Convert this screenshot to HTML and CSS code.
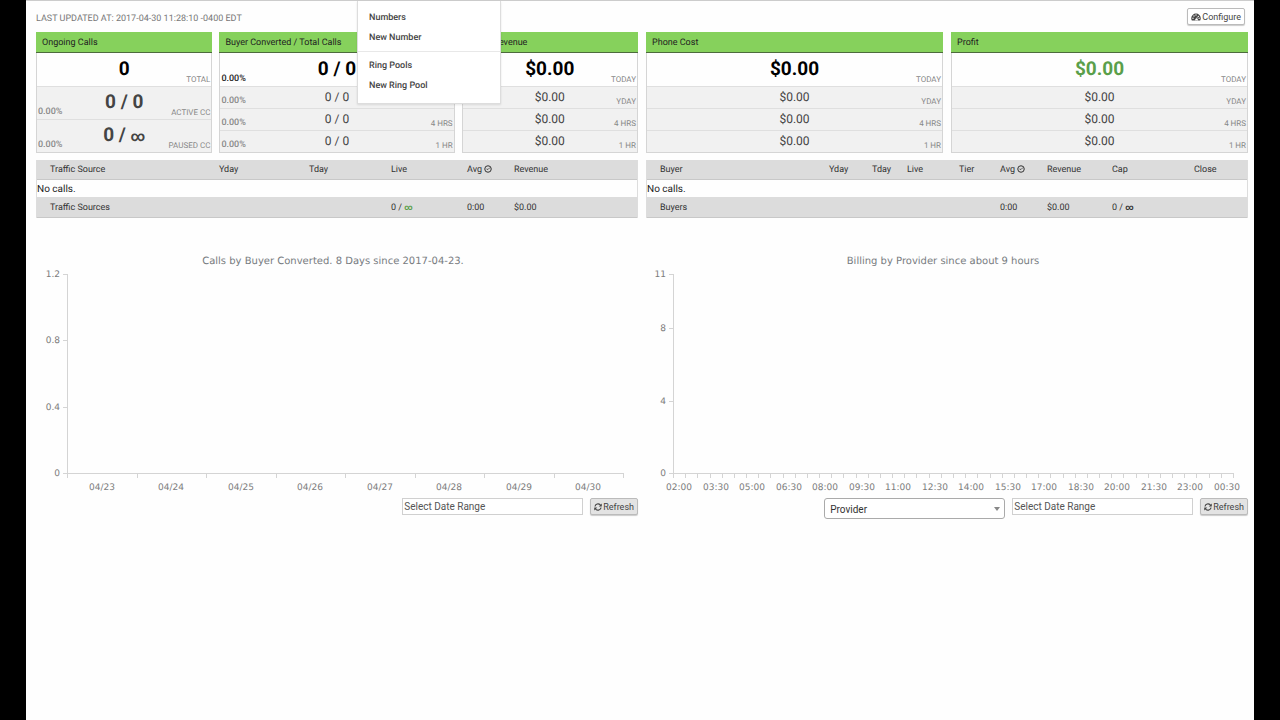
FILE: index.html
```html
<!DOCTYPE html>
<html lang="en">
  <head>
    <meta charset="UTF-8" />
    <meta name="viewport" content="width=device-width, initial-scale=1.0" />
    <title>Call Dashboard</title>
    <link rel="stylesheet" href="styles.css">
  </head>
  <body>
    <svg class="sprite" aria-hidden="true">
      <symbol id="icon-dashboard" viewBox="0 0 20 16">
        <path fill="currentColor" fill-rule="evenodd" d="M10 1a9.500 9.500 0 0 0-9.500 9.500c0 1.700.5 3.200 1.200 4.500h16.600c.7-1.300 1.200-2.800 1.200-4.500A9.500 9.500 0 0 0 10 1zM4 9a1.400 1.400 0 1 1 0 2.800A1.400 1.400 0 0 1 4 9zm2-4.300a1.400 1.400 0 1 1 0 2.800 1.400 1.400 0 0 1 0-2.800zm4-2a1.400 1.400 0 1 1 0 2.800 1.400 1.400 0 0 1 0-2.800zm2.200 4.100 1.200.4-1.100 4a2.400 2.400 0 1 1-1.300-.4zM15 5.500a1.200 1.200 0 1 1 0 2.400 1.200 1.200 0 0 1 0-2.400zM16.200 9a1.400 1.400 0 1 1 0 2.800 1.400 1.400 0 0 1 0-2.800z" />
      </symbol>
      <symbol id="icon-refresh" viewBox="0 0 16 16">
        <path fill="none" stroke="currentColor" stroke-width="2.200" d="M2 7a6 6 0 0 1 10.500-3.200L14 5.300M14 9a6 6 0 0 1-10.500 3.200L2 10.700" />
        <path fill="currentColor" d="M15.500 1v6h-6zM.5 15V9h6z" />
      </symbol>
      <symbol id="icon-clock" viewBox="0 0 16 16">
        <circle cx="8" cy="8" r="6.500" fill="none" stroke="currentColor" stroke-width="2" />
        <path fill="none" stroke="currentColor" stroke-width="1.600" d="M12 5 8 9 5 8" />
      </symbol>
    </svg>

    <main class="page">
      <nav class="menu">
        <a href="#">Numbers</a>
        <a href="#">New Number</a>
        <hr>
        <a href="#">Ring Pools</a>
        <a href="#">New Ring Pool</a>
      </nav>

      <header class="topbar">
        <span class="updated">LAST UPDATED AT: 2017-04-30 11:28:10 -0400 EDT</span>
        <button class="btn btn-white" type="button"><svg class="icon icon-wide"><use href="#icon-dashboard" /></svg>Configure</button>
      </header>

      <div class="columns">
        <section class="column">
          <div class="cards cards-three">
            <div class="card">
              <h2>Ongoing Calls</h2>
              <div class="stat big"><b>0</b><small>TOTAL</small></div>
              <div class="stat big gray"><i>0.00%</i><b>0 / 0</b><small>ACTIVE CC</small></div>
              <div class="stat big gray"><i>0.00%</i><b>0 / <span class="inf">∞</span></b><small>PAUSED CC</small></div>
            </div>
            <div class="card">
              <h2>Buyer Converted / Total Calls</h2>
              <div class="stat big"><i>0.00%</i><b>0 / 0</b><small>TODAY</small></div>
              <div class="stat gray"><i>0.00%</i><b>0 / 0</b><small>YDAY</small></div>
              <div class="stat gray"><i>0.00%</i><b>0 / 0</b><small>4 HRS</small></div>
              <div class="stat gray"><i>0.00%</i><b>0 / 0</b><small>1 HR</small></div>
            </div>
            <div class="card">
              <h2>Gross Revenue</h2>
              <div class="stat big"><b>$0.00</b><small>TODAY</small></div>
              <div class="stat gray"><b>$0.00</b><small>YDAY</small></div>
              <div class="stat gray"><b>$0.00</b><small>4 HRS</small></div>
              <div class="stat gray"><b>$0.00</b><small>1 HR</small></div>
            </div>
          </div>

          <table class="calls">
            <colgroup>
              <col><col class="w90"><col class="w82"><col class="w76"><col class="w47"><col class="w124">
            </colgroup>
            <thead>
              <tr>
                <th>Traffic Source</th>
                <th>Yday</th>
                <th>Tday</th>
                <th>Live</th>
                <th>Avg <svg class="icon"><use href="#icon-clock" /></svg></th>
                <th>Revenue</th>
              </tr>
            </thead>
            <tbody>
              <tr><td colspan="6">No calls.</td></tr>
            </tbody>
            <tfoot>
              <tr>
                <td>Traffic Sources</td>
                <td></td>
                <td></td>
                <td>0 / <span class="inf green">∞</span></td>
                <td>0:00</td>
                <td>$0.00</td>
              </tr>
            </tfoot>
          </table>

          <svg class="chart" id="callsChart" viewBox="0 0 602 256"></svg>
          <form class="filters">
            <input type="text" placeholder="Select Date Range" aria-label="Calls date range">
            <button class="btn" type="button"><svg class="icon"><use href="#icon-refresh" /></svg>Refresh</button>
          </form>
        </section>

        <section class="column">
          <div class="cards cards-two">
            <div class="card">
              <h2>Phone Cost</h2>
              <div class="stat big"><b>$0.00</b><small>TODAY</small></div>
              <div class="stat gray"><b>$0.00</b><small>YDAY</small></div>
              <div class="stat gray"><b>$0.00</b><small>4 HRS</small></div>
              <div class="stat gray"><b>$0.00</b><small>1 HR</small></div>
            </div>
            <div class="card">
              <h2>Profit</h2>
              <div class="stat big"><b class="green">$0.00</b><small>TODAY</small></div>
              <div class="stat gray"><b>$0.00</b><small>YDAY</small></div>
              <div class="stat gray"><b>$0.00</b><small>4 HRS</small></div>
              <div class="stat gray"><b>$0.00</b><small>1 HR</small></div>
            </div>
          </div>

          <table class="calls">
            <colgroup>
              <col><col class="w43"><col class="w35"><col class="w52"><col class="w41"><col class="w47"><col class="w65"><col class="w82"><col class="w54">
            </colgroup>
            <thead>
              <tr>
                <th>Buyer</th>
                <th>Yday</th>
                <th>Tday</th>
                <th>Live</th>
                <th>Tier</th>
                <th>Avg <svg class="icon"><use href="#icon-clock" /></svg></th>
                <th>Revenue</th>
                <th>Cap</th>
                <th>Close</th>
              </tr>
            </thead>
            <tbody>
              <tr><td colspan="9">No calls.</td></tr>
            </tbody>
            <tfoot>
              <tr>
                <td>Buyers</td>
                <td></td>
                <td></td>
                <td></td>
                <td></td>
                <td>0:00</td>
                <td>$0.00</td>
                <td>0 / <span class="inf">∞</span></td>
                <td></td>
              </tr>
            </tfoot>
          </table>

          <svg class="chart" id="billingChart" viewBox="0 0 602 256"></svg>
          <form class="filters">
            <span class="select">
              <select aria-label="Provider">
                <option>Provider</option>
              </select>
            </span>
            <input type="text" placeholder="Select Date Range" aria-label="Billing date range">
            <button class="btn" type="button"><svg class="icon"><use href="#icon-refresh" /></svg>Refresh</button>
          </form>
        </section>
      </div>
    </main>

    <script src="charts.js"></script>
  </body>
</html>
```
FILE: styles.css
```css
* {
  box-sizing: border-box;
}
body {
  margin: 0;
  padding: 0 26px;
  background: #000;
  color: #333;
  font-family: Roboto, "Liberation Sans", sans-serif;
  font-size: 10px;
  text-rendering: geometricPrecision;
}
.page {
  position: relative;
  min-height: 100vh;
  padding: 0 6px 0 10px;
  background: #fefefe;
  border-top: 1px solid #ccc;
}
.sprite {
  display: none;
}
.icon {
  width: 8px;
  height: 8px;
  vertical-align: -1px;
}
.icon-wide {
  width: 10px;
}
.green {
  color: #5a9f4a;
}

/* dropdown */
.menu {
  position: absolute;
  z-index: 2;
  top: 0;
  left: 331px;
  width: 144px;
  padding: 7px 0;
  background: #fff;
  border: 1px solid #ddd;
  border-top: 0;
  box-shadow: 0 1px 2px rgba(0, 0, 0, 0.1);
}
.menu a {
  display: block;
  padding: 1px 11px 0;
  line-height: 19px;
  font-size: 9px;
  font-weight: 500;
  color: #444;
  text-decoration: none;
}
.menu hr {
  margin: 3px 0 4px;
  border: 0;
  border-top: 1px solid #e8e8e8;
}

.topbar {
  display: flex;
  justify-content: space-between;
  align-items: center;
  height: 31px;
  padding-right: 3px;
}
.updated {
  padding-top: 4px;
  font-size: 9px;
  color: #777;
}
.btn {
  display: flex;
  align-items: center;
  justify-content: center;
  gap: 1px;
  height: 17px;
  padding: 0 3px;
  font: 9px Roboto, sans-serif;
  color: #444;
  background: #e3e3e3;
  border: 1px solid #bbb;
  border-radius: 2px;
  box-shadow: 0 1px 1px rgba(0, 0, 0, 0.2);
}
.btn-white {
  background: #fff;
}

.columns {
  display: grid;
  grid-template-columns: 1fr 1fr;
  gap: 8px;
}
.cards {
  display: grid;
}
.cards-three {
  grid-template-columns: 3fr 4fr 3fr;
  gap: 7px;
}
.cards-two {
  grid-template-columns: 1fr 1fr;
  gap: 8px;
}
.card {
  border: 1px solid #d5d5d5;
  border-top: 0;
}
.card h2 {
  height: 21px;
  margin: 0 -1px;
  padding: 1px 6px 0;
  line-height: 20px;
  font-size: 9px;
  font-weight: 400;
  color: #222;
  background: #86d15c;
  border-bottom: 1px solid #4d6b3c;
}
.stat {
  display: grid;
  grid-template-columns: 1fr auto 1fr;
  height: 22px;
  line-height: 20px;
  border-top: 1px solid #dfdfdf;
}
.stat.big {
  height: 33px;
  line-height: 30px;
}
.card h2 + .stat {
  line-height: 32px;
  border-top: 0;
}
.stat.gray {
  background: #f1f1f1;
}
.stat b {
  grid-column: 2;
  grid-row: 1;
  font-size: 12px;
  font-weight: 400;
  color: #444;
}
.stat.big b {
  font-size: 19px;
  font-weight: 700;
}
.stat.big:not(.gray) b:not(.green) {
  color: #000;
}
.stat .green {
  color: #5a9f4a;
}
.stat i,
.stat small {
  align-self: end;
  padding: 0 1px 1px;
  font-size: 8px;
  font-style: normal;
  line-height: 11px;
}
.stat i {
  font-size: 9px;
  font-weight: 500;
  color: #888;
}
.stat.big:not(.gray) i {
  color: #222;
}
.stat small {
  grid-column: 3;
  text-align: right;
  color: #888;
}
.inf {
  font-size: 8px;
  font-weight: 700;
}
.stat .inf {
  font-size: 14px;
}

.calls {
  width: 100%;
  margin-top: 7px;
  table-layout: fixed;
  border-collapse: separate;
  border-spacing: 0;
  border: 1px solid #ddd;
  border-width: 0 1px;
}
.calls th,
.calls td {
  height: 20px;
  padding: 1px 0 0 1px;
  font-size: 9px;
  font-weight: 400;
  text-align: left;
  white-space: nowrap;
}
.calls th,
.calls tfoot td {
  background: #dcdcdc;
  border-bottom: 1px solid #c8c8c8;
}
.calls tbody td {
  height: 17px;
  padding: 1px 0 0;
  font-size: 10px;
  color: #222;
}
.calls th:first-child,
.calls tfoot td:first-child {
  padding-left: 13px;
}
.calls tfoot td {
  height: 21px;
  padding-top: 2px;
}
.w35 { width: 35px; }
.w41 { width: 41px; }
.w43 { width: 43px; }
.w47 { width: 47px; }
.w52 { width: 52px; }
.w54 { width: 54px; }
.w65 { width: 65px; }
.w76 { width: 76px; }
.w82 { width: 82px; }
.w90 { width: 90px; }
.w124 { width: 124px; }

.chart {
  display: block;
  width: 100%;
  margin-top: 24px;
}
.chart text {
  font-family: "DejaVu Sans", Verdana, sans-serif;
  font-size: 9px;
  fill: #7c7c7c;
}
.chart .title {
  font-size: 10px;
  fill: #777b80;
}
.chart path {
  fill: none;
  stroke: #d4d4d4;
}

.filters {
  display: flex;
  justify-content: flex-end;
  align-items: flex-start;
  gap: 7px;
}
.filters input,
.select {
  width: 181px;
}
.filters input {
  height: 17px;
  padding: 0 1px;
  font: 10px Roboto, sans-serif;
  background: #fff;
  border: 1px solid #d0d0d0;
}
.filters input::placeholder {
  color: #555;
}
.select {
  position: relative;
}
.select::after {
  content: "";
  position: absolute;
  top: 9px;
  right: 5px;
  border: 3px solid transparent;
  border-top: 4px solid #888;
  border-bottom: 0;
}
.select select {
  display: block;
  width: 100%;
  height: 21px;
  padding: 1px 5px 0;
  appearance: none;
  font: 10px Roboto, sans-serif;
  color: #333;
  background: #fff;
  border: 1px solid #aaa;
  border-radius: 3px;
}
```
FILE: charts.js
```js
const TOP = 32;
const BOTTOM = 231;

function text(x, y, anchor, value, cls = "") {
  return `<text x="${x}" y="${y}" text-anchor="${anchor}" class="${cls}">${value}</text>`;
}

function drawChart(id, opts) {
  const { left, right, title, max, values, ticks, labels, every } = opts;
  const step = (right - left) / ticks;
  let path = `M${left + 0.5} ${TOP}V${BOTTOM + 0.5}H${right}`;
  let out = text(297, 22, "middle", title, "title");

  values.forEach((v) => {
    const y = Math.round(BOTTOM - (v / max) * (BOTTOM - TOP));
    path += `M${left - 4} ${y + 0.5}H${left}`;
    out += text(left - 7, y + 3, "end", v);
  });

  for (let i = 0; i <= ticks; i++) {
    path += `M${Math.round(left + i * step) + 0.5} ${BOTTOM}v5`;
  }

  labels.forEach((label, i) => {
    const x = Math.round(left + (i * every + 0.5) * step);
    out += text(x, 248, "middle", label);
  });

  document.getElementById(id).innerHTML = `<path d="${path}" />` + out;
}

drawChart("callsChart", {
  left: 31,
  right: 587,
  title: "Calls by Buyer Converted. 8 Days since 2017-04-23.",
  max: 1.2,
  values: [0, 0.4, 0.8, 1.2],
  ticks: 8,
  labels: ["04/23", "04/24", "04/25", "04/26", "04/27", "04/28", "04/29", "04/30"],
  every: 1,
});

drawChart("billingChart", {
  left: 27,
  right: 587,
  title: "Billing by Provider since about 9 hours",
  max: 11,
  values: [0, 4, 8, 11],
  ticks: 46,
  labels: [
    "02:00", "03:30", "05:00", "06:30", "08:00", "09:30", "11:00", "12:30",
    "14:00", "15:30", "17:00", "18:30", "20:00", "21:30", "23:00", "00:30",
  ],
  every: 3,
});
```
